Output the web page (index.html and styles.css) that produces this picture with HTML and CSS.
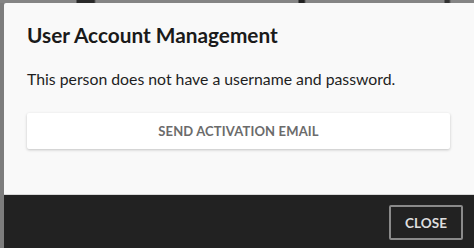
FILE: index.html
```html
<!DOCTYPE html>
<html>
<head>
<meta charset="utf-8">
<link rel="stylesheet" href="styles.css">
</head>
<body>
<div class="backdrop-top"></div>
<div class="screen">
  <div class="modal">
    <section class="dialog">
      <h1 class="title">User Account Management</h1>
      <p class="message">This person does not have a username and password.</p>
      <button class="activation">SEND ACTIVATION EMAIL</button>
    </section>
    <footer class="actions">
      <button class="close">CLOSE</button>
    </footer>
  </div>
</div>
</body>
</html>
```
FILE: styles.css
```css
html, body {
  margin: 0;
  padding: 0;
}
body {
  width: 474px;
  height: 248px;
  overflow: hidden;
  background: #7d7d7d;
  font-family: Lato, "Liberation Sans", Arial, sans-serif;
}
.backdrop-top {
  height: 3px;
  background:
    linear-gradient(90deg,
      #858585 0, #858585 76px,
      #2a2a2a 77px, #2a2a2a 94px,
      #858585 96px, #858585 298px,
      #222 299px, #222 304px,
      #858585 306px, #858585 444px,
      #333 445px, #333 449px,
      #858585 451px);
}
.screen {
  padding-left: 4px;
}
.modal {
  display: flex;
  flex-direction: column;
  height: 245px;
}
.dialog {
  box-sizing: border-box;
  background: #f9f9f9;
  padding: 20px 23px 0 23px;
  height: 192px;
  border-bottom: 1px solid #d8d8d8;
  border-top-left-radius: 2px;
}
.title {
  margin: 0;
  font-size: 20.8px;
  font-weight: 700;
  color: #1a1a1a;
  line-height: 24px;
}
.message {
  margin: 22px 0 0 0;
  font-size: 15.8px;
  line-height: 19px;
  color: #1e1e1e;
}
.activation {
  display: block;
  width: 423px;
  height: 36px;
  margin-top: 25px;
  border: none;
  border-radius: 2px;
  background: #ffffff;
  box-shadow: 0 1px 3px rgba(0,0,0,0.22);
  font-family: Lato, "Liberation Sans", Arial, sans-serif;
  font-size: 13px;
  font-weight: 700;
  color: #6b6b6b;
  letter-spacing: 0.15px;
}
.actions {
  flex: 1;
  background: #222222;
  display: flex;
  justify-content: flex-end;
  align-items: flex-start;
  padding: 10px 11px 0 0;
}
.close {
  width: 74px;
  height: 35px;
  background: transparent;
  border: 2px solid #8a8a8a;
  border-radius: 2px;
  font-family: Lato, "Liberation Sans", Arial, sans-serif;
  font-size: 13.5px;
  font-weight: 700;
  color: #dedede;
  letter-spacing: 0.1px;
}
```
